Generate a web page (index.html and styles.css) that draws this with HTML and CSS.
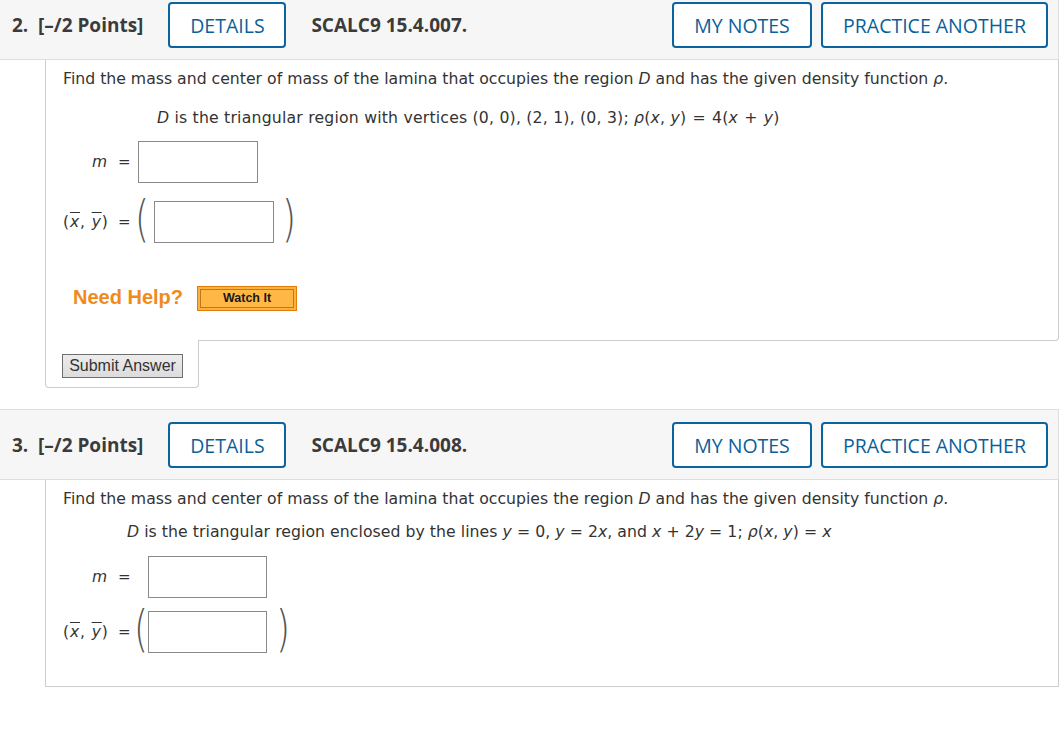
FILE: index.html
```html
<!DOCTYPE html>
<html>
<head>
<meta charset="utf-8">
<link rel="stylesheet" href="styles.css">
</head>
<body>
<div class="page">

  <section class="question">
    <div class="qhead">
      <span class="qnum">2.</span>
      <span class="qpts">[–/2 Points]</span>
      <button class="obtn details">DETAILS</button>
      <span class="qcode">SCALC9 15.4.007.</span>
      <span class="spacer"></span>
      <button class="obtn notes">MY NOTES</button>
      <button class="obtn practice">PRACTICE ANOTHER</button>
    </div>
    <div class="qbody q2body">
      <p class="intro">Find the mass and center of mass of the lamina that occupies the region <i>D</i> and has the given density function <i>ρ</i>.</p>
      <p class="given g2"><i>D</i> is the triangular region with vertices (0, 0), (2, 1), (0, 3); <i>ρ</i>(<i>x</i>, <i>y</i>) <span class="op">=</span> 4(<i>x</i> <span class="op">+</span> <i>y</i>)</p>
      <div class="answers a2">
        <div class="lbl"><i>m</i></div>
        <div class="eq">=</div>
        <div class="ans"><span class="box"></span></div>
        <div class="lbl lxy">(<i class="ovl">x</i>, <i class="ovl">y</i>)</div>
        <div class="eq">=</div>
        <div class="ans"><span class="paren">(</span><span class="box"></span><span class="paren rp">)</span></div>
      </div>
      <div class="help">
        <span class="needhelp">Need Help?</span>
        <span class="watch"><span class="watch-in">Watch It</span></span>
      </div>
    </div>
    <div class="submit-tab">
      <button class="submit">Submit Answer</button>
    </div>
  </section>

  <section class="question q3">
    <div class="qhead">
      <span class="qnum">3.</span>
      <span class="qpts">[–/2 Points]</span>
      <button class="obtn details">DETAILS</button>
      <span class="qcode">SCALC9 15.4.008.</span>
      <span class="spacer"></span>
      <button class="obtn notes">MY NOTES</button>
      <button class="obtn practice">PRACTICE ANOTHER</button>
    </div>
    <div class="qbody q3body">
      <p class="intro">Find the mass and center of mass of the lamina that occupies the region <i>D</i> and has the given density function <i>ρ</i>.</p>
      <p class="given g3"><i>D</i> is the triangular region enclosed by the lines <i>y</i> = 0, <i>y</i> = 2<i>x</i>, and <i>x</i> + 2<i>y</i> = 1; <i>ρ</i>(<i>x</i>, <i>y</i>) = <i>x</i></p>
      <div class="answers a3">
        <div class="lbl"><i>m</i></div>
        <div class="eq">=</div>
        <div class="ans ans-m3"><span class="box"></span></div>
        <div class="lbl lxy">(<i class="ovl">x</i>, <i class="ovl">y</i>)</div>
        <div class="eq">=</div>
        <div class="ans"><span class="paren p3">(</span><span class="box"></span><span class="paren rp p3r">)</span></div>
      </div>
    </div>
  </section>

</div>
</body>
</html>
```

FILE: styles.css
```css
html, body {
  margin: 0;
  padding: 0;
  background: #ffffff;
}

.page {
  margin-top: -11px;
  width: 1059px;
  font-family: "DejaVu Sans", Verdana, sans-serif;
  color: #333333;
}

.question {
  display: flex;
  flex-direction: column;
}

.q3 {
  margin-top: 21px;
}

.qhead {
  display: flex;
  align-items: center;
  height: 46px;
  padding: 12px 10px 11px 12px;
  background: #f6f6f6;
  border-top: 1px solid #dddddd;
  border-bottom: 1px solid #dddddd;
  border-right: 1px solid #dddddd;
  font-family: "Open Sans", sans-serif;
  color: #3b3b3b;
}

.qnum {
  font-weight: 700;
  font-size: 19px;
  width: 26px;
}

.qpts {
  font-weight: 700;
  font-size: 19px;
}

.qcode {
  font-weight: 700;
  font-size: 19px;
  margin-left: 25px;
}

.spacer {
  flex: 1;
}

.obtn {
  box-sizing: border-box;
  height: 46px;
  border: 2px solid #0b64a0;
  border-radius: 4px;
  background: #ffffff;
  color: #0a5f99;
  font-family: "Open Sans", sans-serif;
  font-size: 19.5px;
  font-weight: 500;
  padding: 0;
  margin: 0;
}

.details {
  width: 118px;
  margin-left: 25px;
}

.notes {
  width: 140px;
}

.practice {
  width: 227px;
  margin-left: 9px;
}

.qbody {
  margin-left: 45px;
  border-left: 1px solid #cccccc;
  border-right: 1px solid #cccccc;
  border-bottom: 1px solid #cccccc;
  border-bottom-right-radius: 4px;
  padding-left: 17px;
  font-size: 15.7px;
}

.q2body {
  height: 280px;
}

.q3body {
  height: 206px;
  border-bottom-right-radius: 0;
}

p {
  margin: 0;
}

.intro {
  padding-top: 9px;
  line-height: 20px;
}

.given {
  line-height: 20px;
}

.g2 {
  margin-top: 19px;
  padding-left: 94px;
  letter-spacing: 0.2px;
}

.op {
  padding: 0 1px;
}

.g3 {
  margin-top: 13px;
  padding-left: 64px;
  letter-spacing: 0.05px;
}

.answers {
  display: grid;
  grid-template-columns: 48px 27px auto;
  align-items: center;
}

.a2 {
  row-gap: 18px;
  margin-top: 13px;
}

.a3 {
  row-gap: 13px;
  margin-top: 14px;
}

.lbl {
  font-size: 15.5px;
  color: #333333;
  white-space: nowrap;
  text-align: right;
  padding-right: 4px;
}

.lxy {
  letter-spacing: 0.9px;
  padding-right: 3px;
}

.eq {
  font-size: 15px;
  color: #333333;
  text-align: left;
  padding-left: 7px;
}

.ans {
  display: flex;
  align-items: center;
}

.ans-m3 {
  padding-left: 10px;
}

.box {
  display: inline-block;
  box-sizing: border-box;
  width: 120px;
  height: 42px;
  border: 1px solid #8a8a8a;
  background: #ffffff;
}

.a3 .box {
  width: 119px;
}

.ovl {
  text-decoration: overline;
}

.paren {
  display: inline-block;
  width: 16px;
  font-family: "DejaVu Sans", sans-serif;
  font-weight: 200;
  font-size: 50px;
  line-height: 42px;
  color: #555555;
  transform: scaleX(0.72);
  transform-origin: left center;
  margin-top: -7px;
  text-indent: -4px;
}

.rp {
  margin-left: 11px;
}

.p3 {
  width: 11px;
  margin-left: -1px;
}

.p3r {
  margin-left: 12px;
}

.help {
  display: flex;
  align-items: center;
  margin-top: 43px;
  padding-left: 10px;
}

.needhelp {
  font-family: "Liberation Sans", Arial, sans-serif;
  font-weight: 700;
  font-size: 20px;
  color: #f08a1c;
  margin-top: -2px;
}

.watch {
  display: inline-block;
  box-sizing: border-box;
  margin-left: 14px;
  width: 100px;
  height: 25px;
  padding: 2px;
  background: #fbb040;
  border: 1px solid #e27c0c;
}

.watch-in {
  display: block;
  box-sizing: border-box;
  height: 19px;
  border: 1px solid #c0781a;
  background: #ffb845;
  text-align: center;
  font-family: "Liberation Sans", Arial, sans-serif;
  font-weight: 700;
  font-size: 12.5px;
  line-height: 17px;
  color: #1a1a1a;
}

.submit-tab {
  align-self: flex-start;
  box-sizing: border-box;
  width: 154px;
  height: 48px;
  margin-left: 45px;
  margin-top: -1px;
  background: #ffffff;
  border-left: 1px solid #cccccc;
  border-right: 1px solid #cccccc;
  border-bottom: 1px solid #cccccc;
  border-bottom-left-radius: 4px;
  border-bottom-right-radius: 4px;
  padding: 14px 0 0 16px;
}

.submit {
  box-sizing: border-box;
  width: 121px;
  height: 24px;
  padding: 0;
  border: 1px solid #6f6f6f;
  background: linear-gradient(#ececec, #dcdcdc);
  font-family: "Liberation Sans", Arial, sans-serif;
  font-size: 16px;
  color: #333333;
  border-radius: 0;
}
```
